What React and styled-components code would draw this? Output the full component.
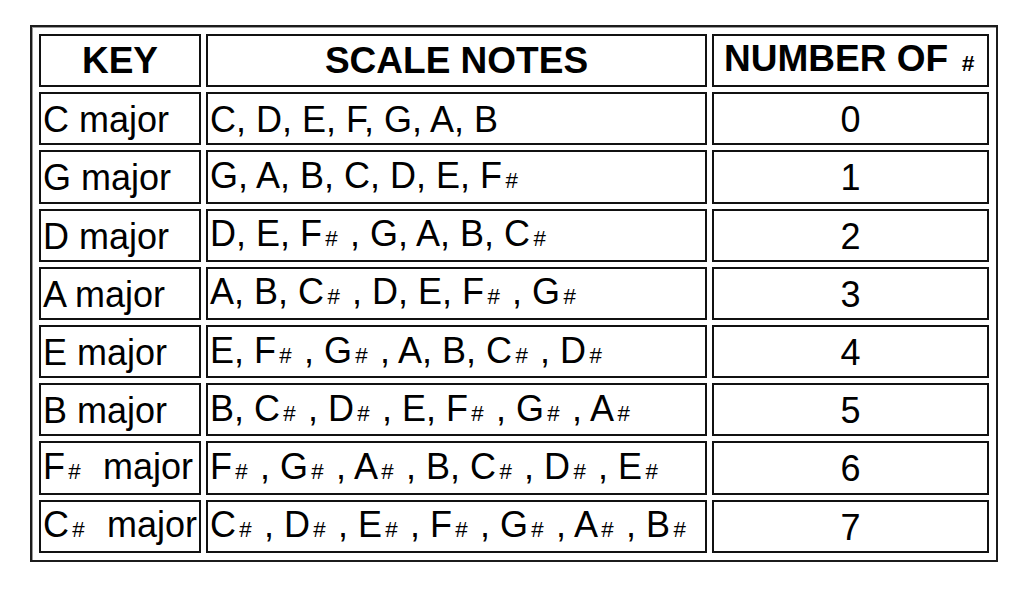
import React from 'react';
import styled, { createGlobalStyle } from 'styled-components';

const GlobalStyle = createGlobalStyle`
  body {
    margin: 0;
    background: #ffffff;
  }
`;

const Page = styled.div`
  padding: 25px 0 0 30px;
  font-family: "Liberation Sans", Arial, sans-serif;
  color: #000;
`;

const Table = styled.table`
  width: 968px;
  table-layout: fixed;
  border-collapse: separate;
  border-spacing: 5px;
  border: 2px solid #1c1c1c;
  padding: 2px;
  box-shadow: inset 1px 1px 0 #9a9a9a;
`;

const Col = styled.col`
  width: ${p => p.w}px;
`;

const Cell = styled.td`
  box-sizing: border-box;
  height: 53.2px;
  border: 2px solid #111;
  padding: ${p => (p.head ? '0 1px' : '3px 2px 0')};
  font-size: ${p => (p.head ? 37 : 36)}px;
  line-height: 40px;
  white-space: nowrap;
  overflow: hidden;
  vertical-align: middle;
  text-align: ${p => (p.center ? 'center' : 'left')};
  font-weight: ${p => (p.head ? 700 : 400)};
`;

const Sharp = styled.span`
  font-size: 0.62em;
  padding: 0 0.1em 0 0.15em;
`;

// keys with their scales; '#' marks a sharp
const rows = [
  ['C major', 'C, D, E, F, G, A, B', '0'],
  ['G major', 'G, A, B, C, D, E, F#', '1'],
  ['D major', 'D, E, F# , G, A, B, C#', '2'],
  ['A major', 'A, B, C# , D, E, F# , G#', '3'],
  ['E major', 'E, F# , G# , A, B, C# , D#', '4'],
  ['B major', 'B, C# , D# , E, F# , G# , A#', '5'],
  ['F#  major', 'F# , G# , A# , B, C# , D# , E#', '6'],
  ['C#  major', 'C# , D# , E# , F# , G# , A# , B#', '7'],
];

const withSharps = text =>
  text.split('#').map((part, i, all) => (
    <React.Fragment key={i}>
      {part.replace(/^ {2}/, '\u00a0\u00a0')}
      {i < all.length - 1 && <Sharp>#</Sharp>}
    </React.Fragment>
  ));

const App = () => (
  <>
    <GlobalStyle />
    <Page>
      <Table>
        <colgroup>
          <Col w={162} />
          <Col w={501} />
          <Col w={277} />
        </colgroup>
        <tbody>
          <tr>
            <Cell head center>KEY</Cell>
            <Cell head center>SCALE NOTES</Cell>
            <Cell head center>
              NUMBER OF <Sharp>#</Sharp>
            </Cell>
          </tr>
          {rows.map(([key, notes, count]) => (
            <tr key={key}>
              <Cell>{withSharps(key)}</Cell>
              <Cell>{withSharps(notes)}</Cell>
              <Cell center>{count}</Cell>
            </tr>
          ))}
        </tbody>
      </Table>
    </Page>
  </>
);

export default App;
